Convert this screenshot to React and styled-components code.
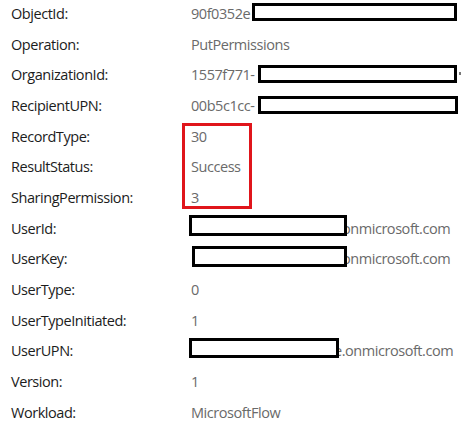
import React from 'react';
import styled, { createGlobalStyle } from 'styled-components';

const Global = createGlobalStyle`
  html, body {
    margin: 0;
    padding: 0;
    background: #fff;
  }
  body {
    font-family: "Open Sans", "Noto Sans", sans-serif;
  }
`;

const rows = [
  { label: 'ObjectId:', value: '90f0352e', redact: { left: 61, width: 205, top: 3, height: 18 } },
  { label: 'Operation:', value: 'PutPermissions' },
  { label: 'OrganizationId:', value: '1557f771-', redact: { left: 67, width: 199, top: 4, height: 18 }, tail: true },
  { label: 'RecipientUPN:', value: '00b5c1cc-', redact: { left: 67, width: 200, top: 4, height: 18 } },
  { label: 'RecordType:', value: '30' },
  { label: 'ResultStatus:', value: 'Success' },
  { label: 'SharingPermission:', value: '3' },
  { label: 'UserId:', value: '', suffix: 'onmicrosoft.com', redact: { left: -2, width: 158, top: 0, height: 21 } },
  { label: 'UserKey:', value: '', suffix: 'onmicrosoft.com', redact: { left: 1, width: 155, top: 0, height: 21 } },
  { label: 'UserType:', value: '0' },
  { label: 'UserTypeInitiated:', value: '1' },
  { label: 'UserUPN:', value: '', suffix: 'e.onmicrosoft.com', redact: { left: -2, width: 150, top: 0, height: 20 } },
  { label: 'Version:', value: '1' },
  { label: 'Workload:', value: 'MicrosoftFlow' },
];

const Page = styled.div`
  width: 474px;
  height: 444px;
  overflow: hidden;
  background: #fff;
`;

const List = styled.div`
  display: grid;
  grid-template-columns: 180px 1fr;
  grid-auto-rows: 30.7px;
  padding: 0 0 0 11px;
  margin-top: -2px;
`;

const Label = styled.div`
  display: flex;
  align-items: center;
  font-size: 14.5px;
  letter-spacing: -0.45px;
  color: #1c1c1c;
  white-space: nowrap;
`;

const Value = styled.div`
  position: relative;
  display: flex;
  align-items: center;
  font-size: 14.5px;
  letter-spacing: -0.45px;
  color: #6a6a6a;
  white-space: nowrap;
`;

const Suffix = styled.span`
  margin-left: ${(p) => p.$offset}px;
`;

const Redaction = styled.span`
  position: absolute;
  box-sizing: border-box;
  border: 3px solid #000;
  background: #fff;
`;

const Dot = styled.span`
  position: absolute;
  left: 268px;
  top: 13px;
  width: 2px;
  height: 3px;
  background: #777;
`;

const Highlight = styled.div`
  grid-column: 2;
  grid-row: 5 / 8;
  justify-self: start;
  width: 70px;
  margin: 2px 0 4px -9px;
  border: 3px solid #e0151b;
  box-sizing: border-box;
  pointer-events: none;
`;

const suffixOffset = (label) => {
  if (label === 'UserUPN:') return 143;
  return 151;
};

export default function App() {
  return (
    <Page>
      <Global />
      <List>
        {rows.map((r, i) => (
          <React.Fragment key={r.label}>
            <Label style={{ gridRow: i + 1, gridColumn: 1 }}>{r.label}</Label>
            <Value style={{ gridRow: i + 1, gridColumn: 2 }}>
              {r.value}
              {r.suffix && <Suffix $offset={suffixOffset(r.label)}>{r.suffix}</Suffix>}
              {r.redact && (
                <Redaction
                  style={{
                    left: r.redact.left,
                    width: r.redact.width,
                    top: r.redact.top + 2,
                    height: r.redact.height,
                  }}
                />
              )}
              {r.tail && <Dot />}
            </Value>
          </React.Fragment>
        ))}
        <Highlight />
      </List>
    </Page>
  );
}
